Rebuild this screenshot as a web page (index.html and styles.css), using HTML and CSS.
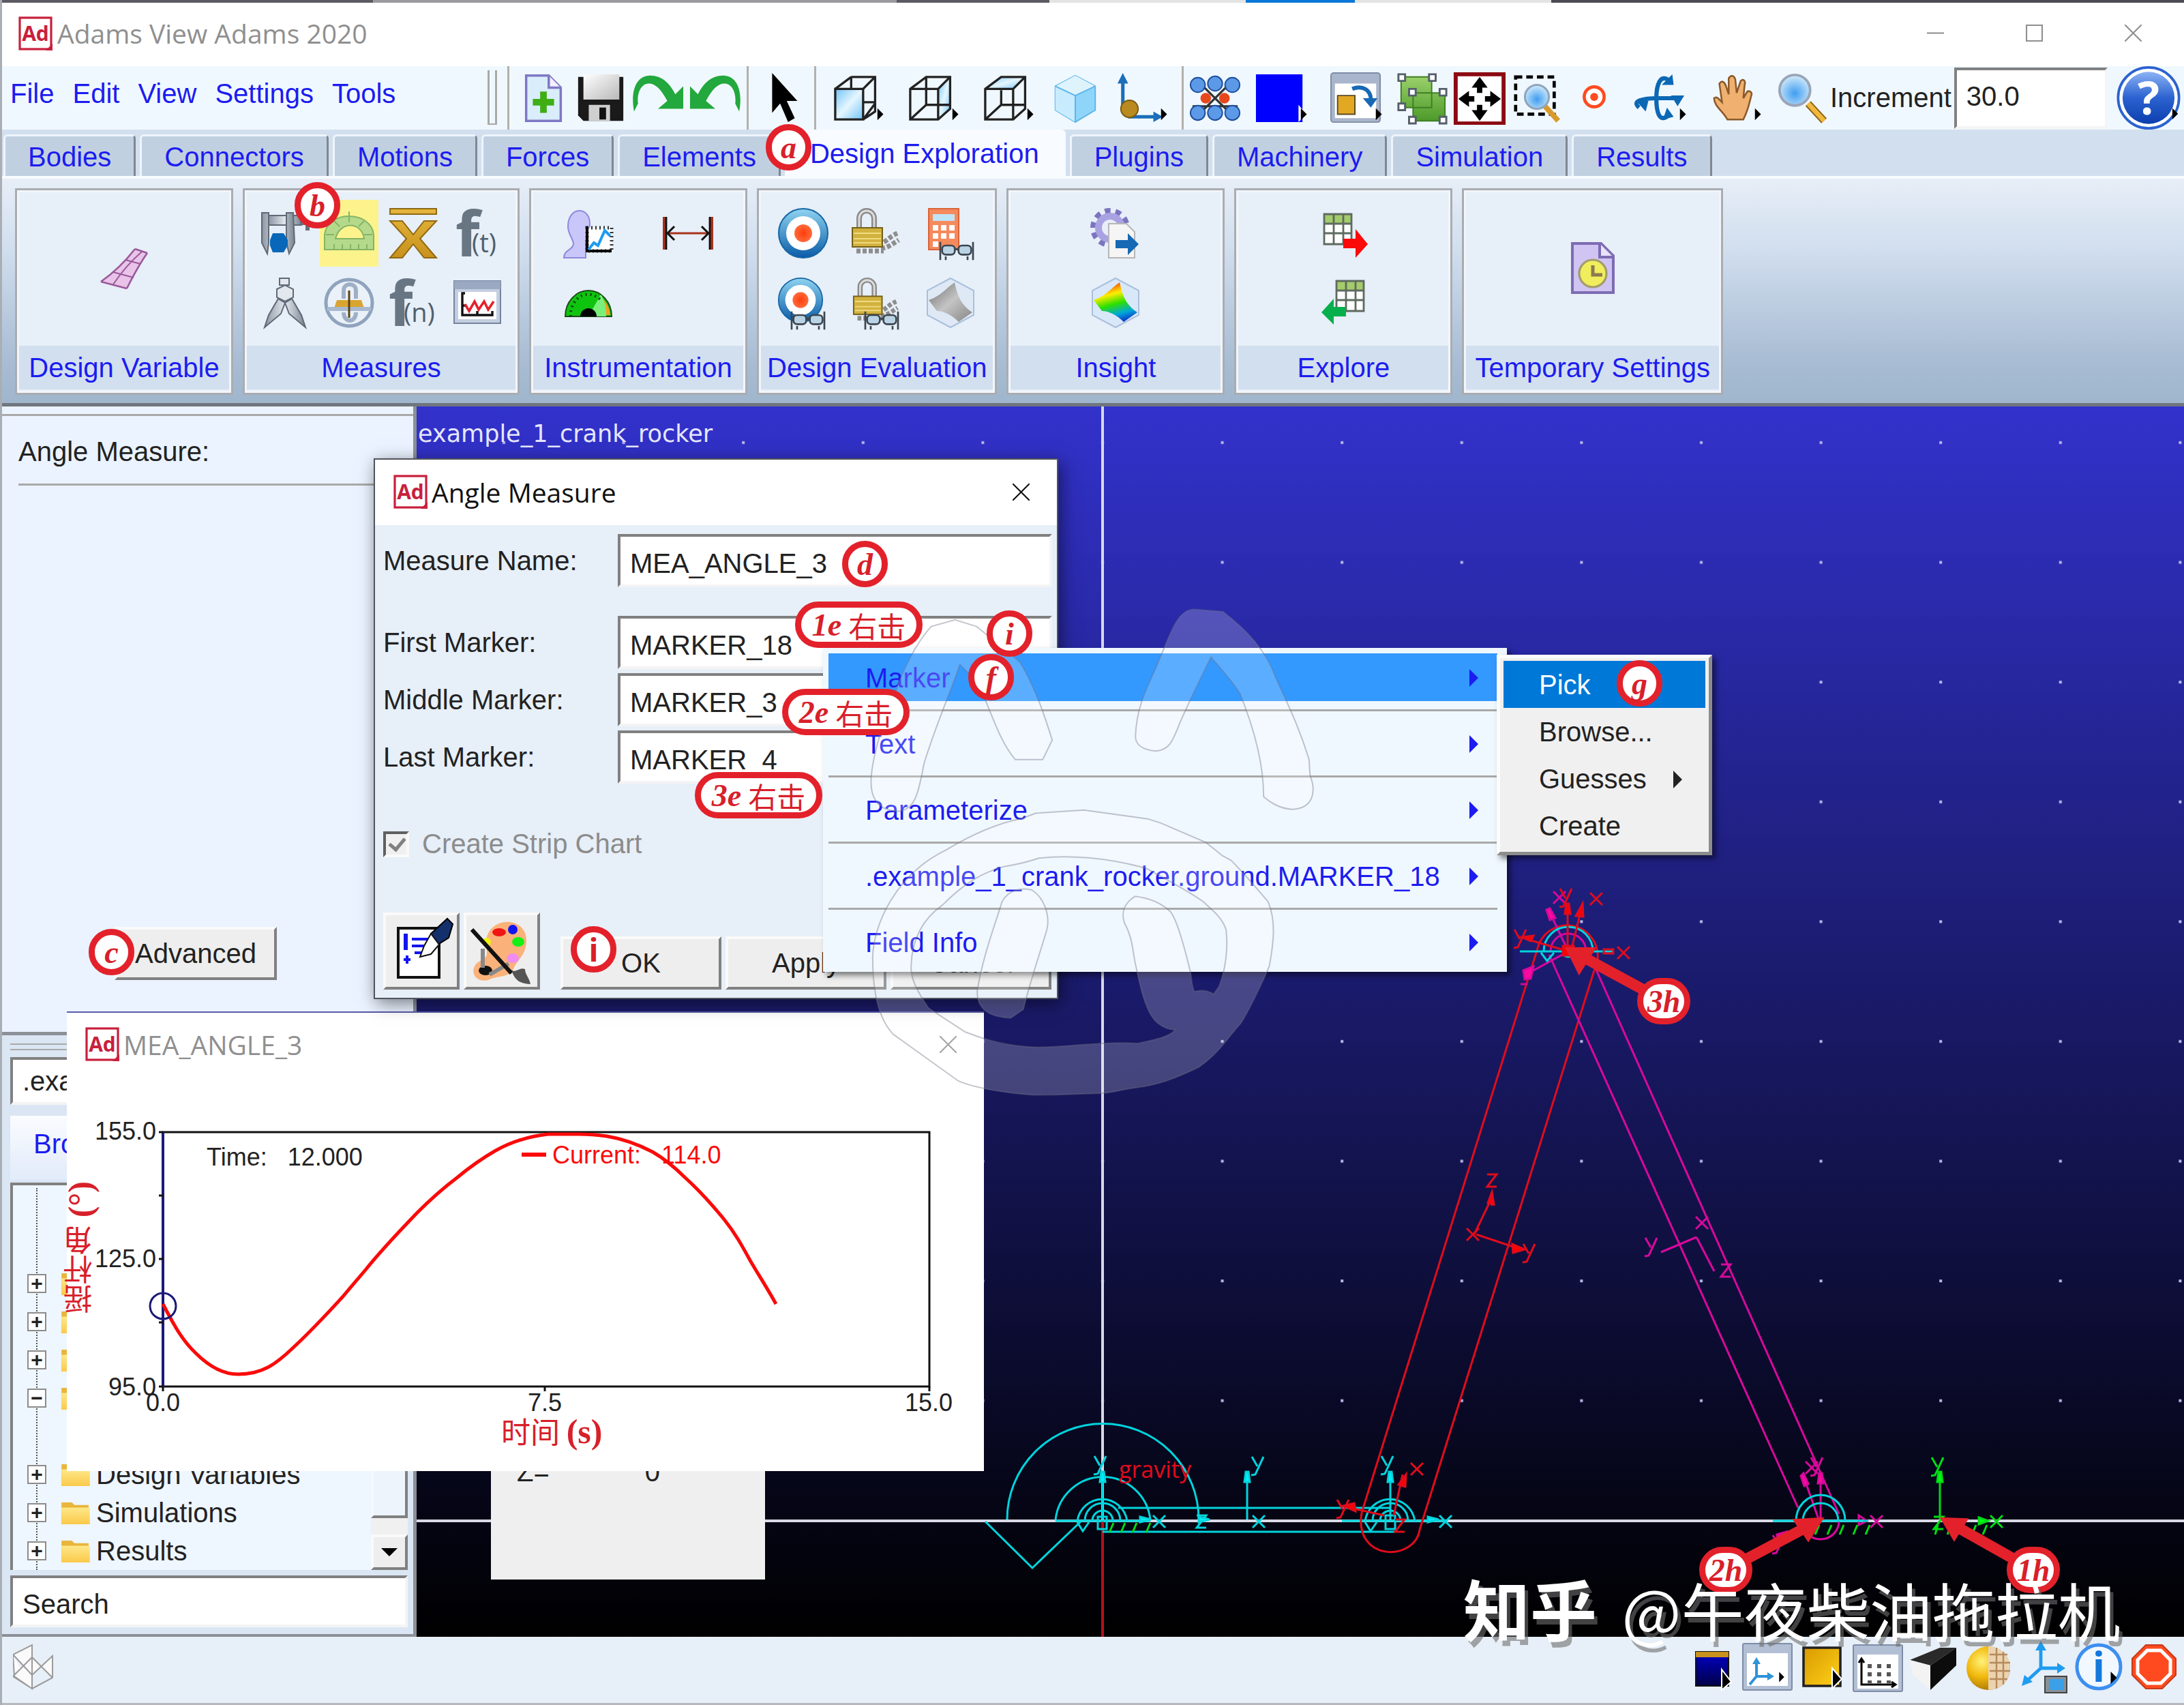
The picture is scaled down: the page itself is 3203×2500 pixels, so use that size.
FILE: index.html
```html
<!DOCTYPE html>
<html lang="zh-CN">
<head>
    <meta charset="UTF-8">
    <meta name="viewport" content="width=device-width, initial-scale=1.0">
    <title>Adams View Adams 2020</title>
    <link rel="stylesheet" href="styles.css">
</head>
<body>
    <!-- shared shapes -->
    <svg class="defs" width="0" height="0">
        <defs>
            <linearGradient id="gBlue" x1="0" y1="0" x2="0" y2="1"><stop offset="0" stop-color="#8fd3f0"/><stop offset="1" stop-color="#0a5ca8"/></linearGradient>
            <linearGradient id="gGlass" x1="0" y1="0" x2="1" y2="1"><stop offset="0" stop-color="#6fc3f7"/><stop offset=".5" stop-color="#e6f6ff"/><stop offset="1" stop-color="#6fc3f7"/></linearGradient>
            <linearGradient id="gSteel" x1="0" y1="0" x2="1" y2="0"><stop offset="0" stop-color="#8b96a3"/><stop offset=".5" stop-color="#e3e8ee"/><stop offset="1" stop-color="#77838f"/></linearGradient>
            <linearGradient id="gGold" x1="0" y1="0" x2="0" y2="1"><stop offset="0" stop-color="#e6b53c"/><stop offset="1" stop-color="#c8921c"/></linearGradient>
            <linearGradient id="gYellow" x1="0" y1="0" x2="1" y2="1"><stop offset="0" stop-color="#d99a00"/><stop offset="1" stop-color="#ffd21a"/></linearGradient>
            <linearGradient id="gGreen" x1="0" y1="0" x2="0" y2="1"><stop offset="0" stop-color="#9ad06a"/><stop offset="1" stop-color="#4c9a2a"/></linearGradient>
            <linearGradient id="gRainbow" x1=".3" y1="0" x2=".6" y2="1"><stop offset="0" stop-color="#f01e0a"/><stop offset=".3" stop-color="#ffee00"/><stop offset=".55" stop-color="#2ee000"/><stop offset=".8" stop-color="#00a8d8"/><stop offset="1" stop-color="#0a3ccc"/></linearGradient>
            <linearGradient id="gGrey" x1="0" y1="0" x2="1" y2="1"><stop offset="0" stop-color="#6e6e6e"/><stop offset=".5" stop-color="#c4c4c4"/><stop offset="1" stop-color="#858585"/></linearGradient>
            <linearGradient id="gHelp" x1="0" y1="0" x2="0" y2="1"><stop offset="0" stop-color="#8cb2f5"/><stop offset=".5" stop-color="#2b62d0"/><stop offset="1" stop-color="#0c3fae"/></linearGradient>
            <linearGradient id="gFolder" x1="0" y1="0" x2="0" y2="1"><stop offset="0" stop-color="#fde88a"/><stop offset="1" stop-color="#fbc94a"/></linearGradient>
            <linearGradient id="gNavy" x1="0" y1="0" x2="0" y2="1"><stop offset="0" stop-color="#0000c8"/><stop offset="1" stop-color="#000048"/></linearGradient>
            <linearGradient id="gSave" x1="0" y1="0" x2="1" y2="1"><stop offset="0" stop-color="#ffffff"/><stop offset="1" stop-color="#b9b9b9"/></linearGradient>
            <radialGradient id="gBall" cx=".35" cy=".35" r=".7"><stop offset="0" stop-color="#fff27a"/><stop offset=".5" stop-color="#f2b90c"/><stop offset="1" stop-color="#a87405"/></radialGradient>
            <radialGradient id="gRed" cx=".5" cy=".5" r=".5"><stop offset="0" stop-color="#ff3d0a"/><stop offset="1" stop-color="#ff6a3c"/></radialGradient>
            <radialGradient id="gLens" cx=".5" cy=".6" r=".6"><stop offset="0" stop-color="#3f9df0"/><stop offset="1" stop-color="#d5ecfb"/></radialGradient>
            <symbol id="logo" viewBox="0 0 25 25"><rect x="1" y="1" width="23" height="23" fill="#fff" stroke="#c8203c" stroke-width="1.6"/><path d="M20 25l5-5v5z" fill="#c8203c"/><text x="12.500" y="18" text-anchor="middle" class="logo-text">Ad</text></symbol>
            <symbol id="glasses" viewBox="0 0 20 12"><rect x="2" y="3" width="7" height="5" rx="2" fill="#b9d3e4" stroke="#3c4650"/><rect x="11" y="3" width="7" height="5" rx="2" fill="#b9d3e4" stroke="#3c4650"/><path d="M1 1v10M19 1v10M9 5h2M4 9v2M16 9v2" stroke="#3c4650" fill="none"/></symbol>
            <symbol id="lock" viewBox="0 0 38 38"><path d="M6 16V8a5.500 5.500 0 0 1 11 0v8" fill="none" stroke="#8b8b8b" stroke-width="4"/><path d="M6 16V8a5.500 5.500 0 0 1 11 0v8" fill="none" stroke="#dcdcdc" stroke-width="1.500"/><path d="M20 27c6-1 7-5 14-8M22 30c5 0 8-3 13-6M4 32h20" stroke="#8d8d8d" stroke-width="3.500" stroke-dasharray="3 1.500" fill="none"/><rect x="1" y="15" width="22" height="14" fill="#d2b23e" stroke="#75601a"/><path d="M2 19h20M2 23h20M2 26h20" stroke="#f0da80"/></symbol>
            <symbol id="target" viewBox="0 0 38 38"><circle cx="19" cy="19" r="18" fill="url(#gBlue)" stroke="#1565a5"/><circle cx="19" cy="19" r="12.500" fill="#fff"/><circle cx="19" cy="19" r="6.500" fill="url(#gRed)"/></symbol>
            <symbol id="dd" viewBox="0 0 8 12"><path d="M1 0l6 6-6 6z" fill="#000"/></symbol>
            <symbol id="folder" viewBox="0 0 22 18"><path d="M0 1h8l2 2h11v15H0z" fill="#e9b53a"/><path d="M0 5h22v13H0z" fill="url(#gFolder)"/></symbol>
            <symbol id="grid" viewBox="0 0 22 24"><rect x="1" y="1" width="20" height="22" fill="#fff"/><rect x="1" y="1" width="20" height="7" fill="#a3cc6a"/><path d="M1 1h20v22H1zM1 8h20M1 15h20M8 1v22M15 1v22" fill="none" stroke="#5f6a60" stroke-width="1.400"/></symbol>
        </defs>
    </svg>

    <div class="app">
        <header class="titlebar">
            <svg class="logo"><use href="#logo"/></svg>
            <h1>Adams View Adams 2020</h1>
            <div class="win-buttons">
                <button aria-label="Minimize"><svg viewBox="0 0 24 24"><path d="M0 12h24"/></svg></button>
                <button aria-label="Maximize"><svg viewBox="0 0 24 24"><path d="M1 1h22v22H1z"/></svg></button>
                <button aria-label="Close"><svg viewBox="0 0 24 24"><path d="M0 0l24 24M24 0L0 24"/></svg></button>
            </div>
        </header>

        <div class="menu-row">
            <nav class="menu">
                <button>File</button>
                <button>Edit</button>
                <button>View</button>
                <button>Settings</button>
                <button>Tools</button>
            </nav>
            <div class="handle"></div>
            <div class="tools">
                <button class="tool" aria-label="New"><svg viewBox="0 0 40 40"><path d="M7 3h17l9 9v25H7z" fill="#d9edfb" stroke="#7f78c4" stroke-width="1.800"/><path d="M24 3v9h9" fill="#f3f0ff" stroke="#7f78c4" stroke-width="1.800"/><path d="M17.500 15h5v5.500H28v5h-5.500V31h-5v-5.500H12v-5h5.500z" fill="#3fae14"/></svg></button>
                <button class="tool" aria-label="Save"><svg viewBox="0 0 40 40"><path d="M3 4h34v33H7l-4-4z" fill="#1a1a1a"/><path d="M7 2h27v19H7z" fill="url(#gSave)"/><path d="M11 25h16v12H11z" fill="#cfcfcf"/><path d="M19 27h5v9h-5z" fill="#111"/></svg></button>
                <button class="tool" aria-label="Redo"><svg viewBox="0 0 40 40"><path d="M2 30C-1 14 4 3 14 3c9 0 15 6 19 14l6-6v17H20l7-6C22 13 18 9 13 9 7 9 4 17 5 24z" fill="#22a83c"/></svg></button>
                <button class="tool" aria-label="Undo"><svg viewBox="0 0 40 40"><path d="M38 30C41 14 36 3 26 3 17 3 11 9 7 17l-6-6v17h19l-7-6c5-9 9-13 14-13 6 0 9 8 8 15z" fill="#22a83c"/></svg></button>
            </div>
            <div class="tools">
                <button class="tool" aria-label="Select"><svg viewBox="0 0 40 40"><path d="M12 1v30l6-7 6 14 5-3-6-13h8z" fill="#000"/></svg></button>
            </div>
            <div class="tools">
                <button class="tool drop" aria-label="Front view"><svg viewBox="0 0 40 40"><path d="M14 4h18v26l-9 6M14 4v19h18M2 13L14 4M23 13l9-9M2 36l12-13M23 36l9-12" fill="none" stroke="#222" stroke-width="1.700"/><path d="M2 13h21v23H2z" fill="url(#gGlass)" stroke="#222" stroke-width="1.700"/><use href="#dd" x="33" y="27" width="6" height="10"/></svg></button>
                <button class="tool drop" aria-label="Right view"><svg viewBox="0 0 40 40"><path d="M23 13l9-9v24l-9 8z" fill="url(#gGlass)"/><path d="M2 13L14 4h18v24l-9 8H2zM2 13h21v23M23 13l9-9M14 4v21h18M2 36l12-11" fill="none" stroke="#222" stroke-width="1.700"/><use href="#dd" x="33" y="27" width="6" height="10"/></svg></button>
                <button class="tool drop" aria-label="Top view"><svg viewBox="0 0 40 40"><path d="M2 13L14 4h18l-9 9z" fill="url(#gGlass)"/><path d="M2 13L14 4h18v24l-9 8H2zM2 13h21v23M23 13l9-9M14 14v11h18M2 36l12-11" fill="none" stroke="#222" stroke-width="1.700"/><use href="#dd" x="33" y="27" width="6" height="10"/></svg></button>
                <button class="tool" aria-label="Isometric view"><svg viewBox="0 0 40 40"><path d="M20 3l15 8v18l-15 9-15-9V11z" fill="#8fd5fa" stroke="#5bb6e8"/><path d="M5 11l15 7v20L5 29z" fill="#c8ebfd"/><path d="M20 3l15 8-15 7-15-7z" fill="#dff3fd"/><path d="M5 11l15 7 15-7M20 18v20" fill="none" stroke="#5bb6e8"/></svg></button>
                <button class="tool drop" aria-label="Orient"><svg viewBox="0 0 40 40"><path d="M6 30V6M10 34h20" stroke="#1a6fb8" stroke-width="2.600"/><path d="M2 9l4-8 4 8zM29 30l7 4-7 4z" fill="#1a6fb8"/><circle cx="11" cy="28" r="6.500" fill="#b88a20" stroke="#7a5a10"/><use href="#dd" x="34" y="27" width="6" height="10"/></svg></button>
            </div>
            <div class="tools tools-wide">
                <button class="tool" aria-label="Verify"><svg viewBox="0 0 40 40"><path d="M3 26h34M8 8l24 24M32 8L8 32" stroke="#333" stroke-width="1.600"/><g fill="#5c9ae8" stroke="#1f4f9c"><circle cx="7" cy="10" r="5.500"/><circle cx="20" cy="9" r="5.500"/><circle cx="33" cy="10" r="5.500"/><circle cx="7" cy="31" r="5.500"/><circle cx="20" cy="31" r="5.500"/><circle cx="33" cy="31" r="5.500"/></g><circle cx="13" cy="20" r="4" fill="#e8471c"/><circle cx="27" cy="20" r="4" fill="#e8471c"/></svg></button>
                <button class="tool drop" aria-label="Color"><svg viewBox="0 0 40 40"><path d="M1 2h35v36H1z" fill="#0000ff"/><path d="M33 25l6 7-6 6z" fill="#fff"/><use href="#dd" x="34" y="27" width="6" height="10"/></svg></button>
                <button class="tool drop" aria-label="Rotate window"><svg viewBox="0 0 40 40"><rect x="1" y="1" width="37" height="37" rx="2" fill="#a9b5ca" stroke="#7f8ca6"/><path d="M4 9h31v26H4z" fill="#fff"/><path d="M6 18h13v14H6z" fill="#e2a824" stroke="#5a4a20"/><path d="M17 13c8-3 14 1 14 8" fill="none" stroke="#1769b5" stroke-width="3"/><path d="M25 20h11l-5 7z" fill="#1769b5"/><use href="#dd" x="34" y="27" width="6" height="10"/></svg></button>
                <button class="tool" aria-label="Group"><svg viewBox="0 0 40 40"><path d="M4 4h23v23H4zM13 16h24v21H13z" fill="url(#gGreen)" stroke="#3f7f23"/><g fill="#fff" stroke="#555f6b" stroke-width="1.500"><path d="M2 2h5v5H2zM25 2h5v5h-5zM2 24h5v5H2zM10 13h5v5h-5zM33 13h5v5h-5zM10 34h5v5h-5zM33 34h5v5h-5z"/></g></svg></button>
                <button class="tool" aria-label="Fit"><svg viewBox="0 0 40 40"><rect x="2" y="2" width="36" height="37" fill="#fff" stroke="#8c0a14" stroke-width="3"/><path d="M20 4l6 8h-4v4h-4v-4h-4zM20 37l6-8h-4v-4h-4v4h-4zM4 20.500l8-6v4h4v4h-4v4zM36 20.500l-8-6v4h-4v4h4v4z" fill="#000"/></svg></button>
                <button class="tool" aria-label="Zoom box"><svg viewBox="0 0 40 40"><rect x="4" y="4" width="29" height="28" fill="none" stroke="#000" stroke-width="2.400" stroke-dasharray="5 3"/><path d="M26 26l10 11" stroke="#d99a2b" stroke-width="4"/><circle cx="20" cy="19" r="9" fill="url(#gLens)" stroke="#8fa6bd" stroke-width="1.600"/></svg></button>
                <button class="tool" aria-label="Center"><svg viewBox="0 0 40 40"><circle cx="20" cy="19" r="7.500" fill="#fff" stroke="#ff4b20" stroke-width="2.400"/><circle cx="20" cy="19" r="3" fill="#ff4b20"/></svg></button>
                <button class="tool drop" aria-label="Rotate"><svg viewBox="0 0 40 40"><g fill="none" stroke="#0c68b4" stroke-width="3.200"><path d="M27 7c-7-6-10 3-10 13s2 19 9 13"/><path d="M4 27c-6-5 3-7 14-7h14"/></g><path d="M21 10h9l-1-8zM25 27l-3 9 8-2zM28 18h10l-5 8zM2 22h9l-2 8z" fill="#0c68b4"/><use href="#dd" x="34" y="27" width="6" height="10"/></svg></button>
                <button class="tool drop" aria-label="Pan"><svg viewBox="0 0 40 40"><path d="M14 36c-3-6-10-10-10-16 2-2 4 1 6 3L8 9c2-3 4-1 5 2l2 6V5c2-3 4-2 5 1l1 10 3-9c2-2 4 0 3 3l-1 10 3-5c2-1 4 1 3 3-2 8-3 12-6 18z" fill="#f0b070" stroke="#8a5a2b" stroke-width="1.300"/><use href="#dd" x="34" y="27" width="6" height="10"/></svg></button>
                <button class="tool" aria-label="Zoom"><svg viewBox="0 0 40 40"><path d="M25 24l12 13" stroke="#8c6418" stroke-width="5.500"/><path d="M25 24l12 13" stroke="#f0b83c" stroke-width="3.500"/><circle cx="15" cy="14" r="11.500" fill="url(#gLens)" stroke="#9aa6b8" stroke-width="2"/></svg></button>
                <label for="increment">Increment</label>
                <input id="increment" class="field increment" type="text" value="30.0">
                <button class="help" aria-label="Help"><svg viewBox="0 0 50 50"><circle cx="25" cy="25" r="24" fill="#fff" stroke="#2b62d0" stroke-width="2"/><circle cx="25" cy="25" r="20.500" fill="url(#gHelp)"/><text x="25" y="38" text-anchor="middle" class="help-text">?</text><use href="#dd" x="43" y="33" width="6" height="9"/></svg></button>
            </div>
        </div>

        <div class="tabs" role="tablist">
            <button role="tab" class="tab">Bodies</button>
            <button role="tab" class="tab">Connectors</button>
            <button role="tab" class="tab">Motions</button>
            <button role="tab" class="tab">Forces</button>
            <button role="tab" class="tab">Elements</button>
            <button role="tab" class="tab active" aria-selected="true">Design Exploration</button>
            <button role="tab" class="tab">Plugins</button>
            <button role="tab" class="tab">Machinery</button>
            <button role="tab" class="tab">Simulation</button>
            <button role="tab" class="tab">Results</button>
        </div>

        <section class="ribbon">
            <div class="group">
                <div class="icons single">
                    <button class="cell" aria-label="Design Variable"><svg viewBox="0 0 38 38"><path d="M27 5l9 3C31 15 26 24 21 34L2 29C12 22 20 14 27 5z" fill="#e9c4e8"/><path d="M27 5l9 3M2 29l19 5M27 5C20 14 12 22 2 29M36 8c-5 7-10 16-15 26" fill="none" stroke="#9a5a9c" stroke-width="1.300"/><path d="M20 13l11 3M11 22l15 4M32 7C24 14 17 22 11 31" stroke="#9a5a9c" fill="none"/></svg></button>
                </div>
                <h2>Design Variable</h2>
            </div>
            <div class="group">
                <div class="icons four">
                    <button class="cell" aria-label="Point-to-point"><svg viewBox="0 0 38 38"><path d="M7 6h24v7H7z" fill="url(#gSteel)" stroke="#5f6a76"/><path d="M30 8h7v9h-3v-4h-4z" fill="#66717d"/><path d="M2 4h5v22l-1 8-4-8zM20 4h5l1 22-4 8-2-8z" fill="url(#gSteel)" stroke="#5f6a76"/><path d="M10 19h8l3 5v4l-3 5h-8l-2-5v-4z" fill="#0867b8"/></svg></button>
                    <button class="cell lit" aria-label="Angle"><svg viewBox="0 0 38 38"><path d="M1 31V20C3 2 35 2 37 20v11z" fill="#b4d98a" stroke="#86b466"/><path d="M9 23h21c-2-13-18-13-21 0z" fill="#fdf38c" stroke="#86b466"/><path d="M19 3v8M2 20h6M30 20h6M8 27v4M14 27v4M20 27v4M26 27v4M32 27v4M8 10l4 4M30 10l-4 4" stroke="#86b466"/></svg></button>
                    <button class="cell" aria-label="Average"><svg viewBox="0 0 38 38"><path d="M2 1h34v4H2zM2 10h9l8 10 8-10h9L24 23l12 14h-9l-8-10-8 10H2l12-14z" fill="url(#gGold)" stroke="#8f6a14"/></svg></button>
                    <button class="cell" aria-label="f(t)"><svg viewBox="0 0 38 38"><text x="3" y="36" class="fx">f</text><text x="15" y="33" class="fx-sub">(t)</text></svg></button>
                    <button class="cell" aria-label="Orientation"><svg viewBox="0 0 38 38"><path d="M15 1h7v5h-7zM13 9l6-3 6 3v6l-6 3-6-3z" fill="#e3e8ee" stroke="#5f6a76"/><path d="M14 16l5 3-3 8L4 37l3-9zM24 16l-5 3 3 8 12 10-3-9z" fill="url(#gSteel)" stroke="#5f6a76"/></svg></button>
                    <button class="cell" aria-label="Computed"><svg viewBox="0 0 38 38"><circle cx="19" cy="19" r="17" fill="#eaf1f9" stroke="#8fa3be" stroke-width="2.500"/><path d="M15 16V10c0-6 9-6 9 0v6M15 26c0 8 9 8 9 0" fill="none" stroke="#9fb0c6" stroke-width="3"/><path d="M10 17h18l2 6H8z" fill="#d9a531"/><path d="M3 22h32v3H3z" fill="#a9b9cf"/><path d="M19 10v20" stroke="#5a4310" stroke-width="1.500"/></svg></button>
                    <button class="cell" aria-label="f(n)"><svg viewBox="0 0 38 38"><text x="1" y="36" class="fx">f</text><text x="12" y="33" class="fx-sub">(n)</text></svg></button>
                    <button class="cell" aria-label="Strip chart"><svg viewBox="0 0 38 38"><rect x="2" y="3" width="34" height="31" fill="#c3cee0" stroke="#75839f"/><path d="M2 3h34v6H2z" fill="#9aa8c2"/><path d="M5 11h28v20H5z" fill="#fff"/><path d="M10 12h-2v16h22v-3M8 21h3M19 25v3" fill="none" stroke="#111" stroke-width="1.700"/><path d="M10 20l3 5 4-7 3 6 4-6 3 6 4-6" fill="none" stroke="#e4202c" stroke-width="1.800"/></svg></button>
                </div>
                <h2>Measures</h2>
            </div>
            <div class="group">
                <div class="icons two">
                    <button class="cell" aria-label="Object"><svg viewBox="0 0 38 38"><path d="M1 37c0-6 6-5 7-10 0-4-4-7-4-13C4-1 20-1 20 12c0 6-3 8-3 14v11z" fill="#c9c6fa" stroke="#8f89dc"/><path d="M18 15h18v17H18z" fill="#fff" stroke="#333" stroke-dasharray="1 2" stroke-width="2.500"/><path d="M18 14v18h18" fill="none" stroke="#000" stroke-width="2"/><path d="M19 31l4-5 3 2 5-11 4 4" fill="none" stroke="#1f9bf0" stroke-width="2"/></svg></button>
                    <button class="cell" aria-label="Dimension"><svg viewBox="0 0 38 38"><path d="M2 7v24M36 7v24" stroke="#a8321c" stroke-width="3"/><path d="M3 7v24M35 7v24" stroke="#111" stroke-width="1.400"/><path d="M5 19h28" stroke="#a8321c" stroke-width="1.500"/><path d="M9 14l-5 5 5 5M29 14l5 5-5 5" fill="none" stroke="#111" stroke-width="1.500"/></svg></button>
                    <button class="cell" aria-label="Gauge"><svg viewBox="0 0 38 38"><path d="M2 29a17 19 0 0 1 34 0z" fill="#0fc40f" stroke="#1b4d1b"/><path d="M27 14a17 19 0 0 1 8 14h-6z" fill="#f0a020"/><path d="M28 13L19 29h13c0-7-1-12-4-16z" fill="#7af07a"/><path d="M13 29a6 6 0 0 1 12 0z" fill="#000"/><path d="M6 29a13 15 0 0 1 22-12" fill="none" stroke="#0b3d0b" stroke-width="2" stroke-dasharray="1 2.500"/></svg></button>
                </div>
                <h2>Instrumentation</h2>
            </div>
            <div class="group">
                <div class="icons three">
                    <button class="cell" aria-label="Objective"><svg><use href="#target"/></svg></button>
                    <button class="cell" aria-label="Constraint"><svg><use href="#lock"/></svg></button>
                    <button class="cell" aria-label="Evaluate"><svg viewBox="0 0 38 38"><path d="M3 1h22v30H3z" fill="#f58a5c" stroke="#d9653a"/><path d="M6 5h16v5H6z" fill="#bfe4f7"/><g fill="#fff"><path d="M6 13h4v4H6zM12 13h4v4h-4zM18 13h4v4h-4zM6 19h4v4H6zM12 19h4v4h-4zM18 19h4v4h-4zM6 25h4v4H6z"/></g><use href="#glasses" x="9" y="24" width="29" height="16"/></svg></button>
                    <button class="cell" aria-label="Review objective"><svg viewBox="0 0 38 38"><use href="#target" width="34" height="34"/><use href="#glasses" x="8" y="24" width="29" height="16"/></svg></button>
                    <button class="cell" aria-label="Review constraint"><svg viewBox="0 0 38 38"><use href="#lock" width="38" height="36"/><use href="#glasses" x="8" y="24" width="29" height="16"/></svg></button>
                    <button class="cell" aria-label="Surface"><svg viewBox="0 0 38 38"><path d="M19 1l17 9v18l-17 9-17-9V10z" fill="#dfe9f6" stroke="#a9bfdc"/><path d="M3 17C12 14 16 8 22 4c2 9 4 16 13 22l-10 7C20 28 14 25 9 25z" fill="url(#gGrey)"/></svg></button>
                </div>
                <h2>Design Evaluation</h2>
            </div>
            <div class="group">
                <div class="icons one">
                    <button class="cell" aria-label="Export"><svg viewBox="0 0 38 38"><circle cx="15" cy="15" r="12" fill="none" stroke="#7d74c0" stroke-width="5" stroke-dasharray="4 3.500"/><circle cx="15" cy="15" r="8.500" fill="#e7eef7" stroke="#a9a2e2" stroke-width="5"/><path d="M14 12h13l6 6v19H14z" fill="#f5f5f5" stroke="#b7b7b7"/><path d="M19 24h9v-5l8 8-8 8v-5h-9z" fill="#1769b5"/></svg></button>
                    <button class="cell" aria-label="Insight"><svg viewBox="0 0 38 38"><path d="M19 1l17 9v18l-17 9-17-9V10z" fill="#d9e8f8" stroke="#a9bfdc"/><path d="M3 17C12 14 16 8 22 4c2 9 4 16 13 22l-10 7C20 28 14 25 9 25z" fill="url(#gRainbow)"/></svg></button>
                </div>
                <h2>Insight</h2>
            </div>
            <div class="group">
                <div class="icons one">
                    <button class="cell" aria-label="Export table"><svg viewBox="0 0 38 38"><use href="#grid" x="4" y="4" width="22" height="24"/><path d="M19 23h9v-7l9 11-9 10v-7h-9z" fill="#fb0a0a"/></svg></button>
                    <button class="cell" aria-label="Import table"><svg viewBox="0 0 38 38"><use href="#grid" x="13" y="2" width="22" height="24"/><path d="M21 22h-9v-6L3 26l9 9v-6h9z" fill="#05b04c"/></svg></button>
                </div>
                <h2>Explore</h2>
            </div>
            <div class="group">
                <div class="icons single">
                    <button class="cell" aria-label="Temporary Settings"><svg viewBox="0 0 38 38"><path d="M4 1h21l9 9v27H4z" fill="#cfc4f2" stroke="#7d6cb4" stroke-width="2"/><path d="M24 1v10h10" fill="#e8e2fb" stroke="#7d6cb4" stroke-width="2"/><circle cx="19" cy="23" r="10" fill="#f0ee5c" stroke="#a39c6c" stroke-width="1.600"/><path d="M19 17v7h7" fill="none" stroke="#8a7a50" stroke-width="2.500"/></svg></button>
                </div>
                <h2>Temporary Settings</h2>
            </div>
        </section>

        <main class="workspace">
            <aside class="sidebar">
                <section class="measure">
                    <h2>Angle Measure:</h2>
                    <button class="btn advanced">Advanced</button>
                </section>
                <section class="browser">
                    <div class="grip"></div>
                    <input class="field combo" type="text" value=".exa" aria-label="Model">
                    <div class="browse"><button>Browse</button></div>
                    <div class="tree">
                        <ul>
                            <li></li>
                            <li></li>
                            <li><button class="exp" aria-label="Expand">+</button><svg><use href="#folder"/></svg></li>
                            <li><button class="exp" aria-label="Expand">+</button><svg><use href="#folder"/></svg></li>
                            <li><button class="exp" aria-label="Expand">+</button><svg><use href="#folder"/></svg></li>
                            <li><button class="exp" aria-label="Collapse">−</button><svg><use href="#folder"/></svg></li>
                            <li></li>
                            <li><button class="exp" aria-label="Expand">+</button><svg><use href="#folder"/></svg>Design Variables</li>
                            <li><button class="exp" aria-label="Expand">+</button><svg><use href="#folder"/></svg>Simulations</li>
                            <li><button class="exp" aria-label="Expand">+</button><svg><use href="#folder"/></svg>Results</li>
                        </ul>
                        <div class="scroll">
                            <div class="thumb"></div>
                            <button class="down" aria-label="Scroll down"></button>
                        </div>
                    </div>
                    <input class="field search" type="text" value="Search" aria-label="Search">
                </section>
            </aside>

            <div class="canvas">
                <svg class="model" viewBox="611 596 2592 1804">
                    <defs>
                        <pattern id="dots" x="1529" y="561" width="175.600" height="175.600" patternUnits="userSpaceOnUse"><rect x="86" y="86" width="4" height="4" fill="#b9b9ea"/></pattern>
                        <g id="x"><path d="M-9-9L9 9M9-9L-9 9"/></g>
                        <g id="y"><path d="M-8-13L0 1M9-13L-3 13l-6 1"/></g>
                        <g id="z"><path d="M-7-9H7L-7 9H7"/></g>
                        <g id="up"><path d="M0 0V-70"/><path d="M-4-55h8l-2-15h-4z" class="solid"/></g>
                    </defs>
                    <rect x="610" y="596" width="2593" height="1628" fill="url(#dots)"/>
                    <text x="613" y="648" class="model-name">example_1_crank_rocker</text>
                    <path d="M1617 596V2230" class="axis"/>
                    <path d="M610 2230H3203" class="axis"/>
                    <path d="M1617 2230V2400" stroke="#b4101c" stroke-width="4"/>

                    <!-- crank -->
                    <g class="ln cyan">
                        <path d="M1477 2228a140 140 0 0 1 281 0M1548 2228a70 71 0 0 1 139 0M1580 2230a37 38 0 0 1 73 0M1591 2230a26 26 0 0 1 52 0M1602 2230a15 15 0 0 1 30 0"/>
                        <path d="M1548 2230h139M1445 2231l69 68 71-68M1580 2232l8 13 9-13"/>
                        <path d="M1640 2211H2039M1617 2246H2046"/>
                        <path d="M2002 2230a37 38 0 0 1 73 0M2013 2230a26 26 0 0 1 52 0M2024 2230a15 15 0 0 1 30 0M1968 2230h150M2002 2232l8 13 9-13"/>
                        <rect x="1610" y="2224" width="13" height="18"/>
                        <rect x="2032" y="2222" width="14" height="20"/>
                        <use href="#up" x="1617" y="2228"/><use href="#up" x="1829" y="2228"/><use href="#up" x="2039" y="2228"/>
                        <use href="#y" x="1613" y="2148"/><use href="#y" x="1844" y="2149"/><use href="#y" x="2034" y="2148"/>
                        <use href="#x" x="1700" y="2231"/><use href="#x" x="1846" y="2231"/><use href="#x" x="2120" y="2231"/>
                        <use href="#z" x="1762" y="2231"/>
                        <path d="M1672 2224l16 4-16 4zM1758 2224l16 4-16 4zM2094 2224l16 4-16 4z" class="solid"/>
                    </g>
                    <text x="1641" y="2167" class="gravity">gravity</text>
                    <path class="ln green" d="M1633 2233l-6 14M1650 2233l-6 14M1667 2233l-6 14M1687 2233l-6 14"/>

                    <!-- coupler -->
                    <g class="ln red">
                        <path d="M2257 1384L1997 2218M2343 1407L2082 2243M2257 1384a45 45 0 0 1 86 23M1997 2218C1985 2290 2075 2290 2082 2243"/>
                        <path d="M2162 1810L2186 1760M2165 1810l66 22M2188 1748v20M2044 2222l13-60M2030 2222l-54-12"/>
                        <path d="M2182 1764l6-16 3 18zM2218 1824l18 8-17 5zM2051 2177l11-15-1 18zM1970 2208l16-4 2 12z" class="solid"/>
                        <use href="#z" x="2188" y="1731"/><use href="#x" x="2160" y="1810"/><use href="#y" x="2242" y="1837"/>
                        <use href="#x" x="2078" y="2154"/><use href="#y" x="1969" y="2212"/><use href="#z" x="2053" y="2237"/>
                    </g>

                    <!-- rocker -->
                    <g class="ln pink">
                        <path d="M2272 1400L2637 2211M2340 1420L2697 2220M2643 2230a27 27 0 0 0 54 0M2274 1395a26 26 0 0 1 52 0"/>
                        <path d="M2300 1395L2271 1334M2300 1395L2236 1430M2488 1814l-52 22M2488 1814l26 50M2670 2230V2160M2668 2230l-24-68M2670 2232l-60 30"/>
                        <path d="M2268 1334l5-2 8 14-8 3zM2234 1423l15-6-4 18-9 1zM2641 2164l4-4 7 16-6 3zM2666 2175h8l-2-15h-4zM2606 2250l14-4-4 14-8 2z" class="solid"/>
                        <use href="#x" x="2287" y="1316"/><use href="#x" x="2496" y="1793"/><use href="#y" x="2421" y="1828"/><use href="#z" x="2531" y="1863"/>
                        <use href="#x" x="2657" y="2152"/><use href="#y" x="2664" y="2150"/><use href="#x" x="2752" y="2231"/><use href="#y" x="2608" y="2264"/>
                        <path d="M2230 1443h10M2726 2222l12 8-12 6z"/>
                    </g>
                    <g class="ln cyan">
                        <path d="M2264 1395a36 36 0 0 1 72 0M2229 1395h138M2260 1397l9 12 10-12M2292 1398a9 9 0 0 0 16 0"/>
                        <path d="M2634 2230a36 38 0 0 1 72 0M2644 2230a26 26 0 0 1 52 0M2600 2230h140M2634 2232l8 12"/>
                    </g>
                    <g class="ln red">
                        <use href="#up" x="2299" y="1395"/>
                        <path d="M2304 1395l12-50M2290 1392l-48-14M2352 1392h14v6h-14z"/>
                        <path d="M2311 1343l10-18 1 19zM2232 1374l17-2-4 8zM2292 1387h16v14h-16z" class="solid"/>
                        <use href="#y" x="2296" y="1316"/><use href="#x" x="2341" y="1318"/><use href="#x" x="2381" y="1397"/><use href="#y" x="2229" y="1376"/>
                    </g>
                    <path class="ln green" d="M2668 2236l-6 14M2686 2236l-6 14M2704 2236l-6 14M2724 2236l-6 14M2742 2236l-6 14M2842 2236l-4 14M2862 2236l-6 14M2880 2236l-6 14M2898 2236l-6 14M2914 2236l-6 14"/>
                    <g class="ln green">
                        <use href="#up" x="2845" y="2228"/><use href="#y" x="2841" y="2150"/><use href="#x" x="2928" y="2231"/><use href="#z" x="2843" y="2233"/>
                        <path d="M2902 2225l14 5-14 5z" class="solid"/>
                    </g>

                    <g class="callout-arrows">
                        <path d="M2430 1462L2325 1405M2531 2302L2648 2240M2982 2302L2872 2240"/>
                        <path d="M2300 1392h36l-20 32zM2670 2228l-36 2 18 26zM2850 2228l32 1-16 26z" class="solid"/>
                    </g>
                </svg>
            </div>
        </main>

        <footer class="statusbar">
            <svg class="status-mark" viewBox="0 0 30 34"><path d="M0 8l14-7v32L1 24zM14 33l15-8V9l-15 14L0 8M14 33L0 24l14-14 15 15" fill="#fafafa" stroke="#9b9b9b"/></svg>
            <div class="status-icons">
                <button aria-label="Background"><svg viewBox="0 0 38 38"><path d="M7 8h24v25H7z" fill="url(#gNavy)" stroke="#111"/><path d="M7 8h24v4H7z" fill="#c8921c"/><path d="M26 21v15l7-6z" fill="#000" stroke="#fff"/></svg></button>
                <button aria-label="Triad"><svg viewBox="0 0 38 38"><rect x="1" y="2" width="36" height="34" rx="1" fill="#b3bfd4" stroke="#7f8ca6"/><path d="M4 9h30v24H4z" fill="#fff"/><path d="M11 26V16M11 26h9M11 26l-5 6" stroke="#2f93d8" stroke-width="2" fill="none"/><path d="M8 17l3-5 3 5zM19 23l5 3-5 3z" fill="#2f93d8"/><use href="#dd" x="27" y="22" width="5" height="9"/></svg></button>
                <button aria-label="Color"><svg viewBox="0 0 38 38"><path d="M5 5h27v28H5z" fill="url(#gYellow)" stroke="#222" stroke-width="1.800"/><path d="M26 20v15l7-7z" fill="#000" stroke="#fff"/></svg></button>
                <button aria-label="Grid"><svg viewBox="0 0 38 38"><rect x="1" y="3" width="36" height="34" rx="1" fill="#b3bfd4" stroke="#7f8ca6"/><path d="M4 10h30v25H4z" fill="#fff"/><path d="M7 14v18h24M5 16l2-3 2 3M29 30l3 2-3 2" fill="none" stroke="#000" stroke-width="1.500"/><g stroke="#555" stroke-width="3" stroke-dasharray="3 3"><path d="M13 17v14M20 17v14M27 17v14"/></g></svg></button>
                <button aria-label="Depth"><svg viewBox="0 0 38 38"><path d="M2 14L24 5h12L17 18z" fill="#2a2a2a"/><path d="M17 18L36 5v13L17 36z" fill="#0c0c0c"/><path d="M2 14l15 4v18L4 25z" fill="#f3f3f3"/></svg></button>
                <button aria-label="Shading"><svg viewBox="0 0 38 38"><circle cx="19" cy="20" r="16" fill="url(#gBall)"/><path d="M19 4a16 16 0 0 1 0 32z" fill="#ecd3b0"/><path d="M20 10h13M20 16h15M20 22h15M20 28h13M25 5v30M30 8v24" stroke="#b58a5c" stroke-width="1.200"/></svg></button>
                <button aria-label="Axes"><svg viewBox="0 0 38 38"><path d="M17 20V4M17 20h14M17 20L6 30" stroke="#1f9bf0" stroke-width="2.400"/><path d="M13 7l4-7 4 7zM29 16l6 4-6 4zM3 33l2-8 6 5z" fill="#1f9bf0"/><path d="M20 26h16v12H20z" fill="#8a9096" stroke="#444"/><path d="M23 28h11v8H23z" fill="#3aa0e8"/></svg></button>
                <button aria-label="Info"><svg viewBox="0 0 38 38"><circle cx="19" cy="19" r="16" fill="#f2f8ff" stroke="#3d8ff0" stroke-width="2.500"/><text x="19" y="30" text-anchor="middle" class="info-text">i</text><use href="#dd" x="27" y="22" width="6" height="10"/></svg></button>
                <button aria-label="Stop"><svg viewBox="0 0 38 38"><path d="M13 3h12l10 10v12L25 35H13L3 25V13z" fill="#ff4a20" stroke="#c83a1a"/><path d="M14 7h10l7 7v10l-7 7H14l-7-7V14z" fill="none" stroke="#fff" stroke-width="2.500"/></svg></button>
            </div>
        </footer>

        <!-- coordinate window -->
        <div class="coords"><span>Z=</span><span>0</span></div>

        <!-- strip chart window -->
        <section class="window chart">
            <div class="win-title">
                <svg class="logo"><use href="#logo"/></svg>
                <h2>MEA_ANGLE_3</h2>
                <button class="close" aria-label="Close"><svg viewBox="0 0 24 24"><path d="M0 0l24 24M24 0L0 24"/></svg></button>
            </div>
            <svg class="plot" viewBox="98 1577 1345 580">
                <path d="M239 1660H1363V2033H239z" fill="none" stroke="#111" stroke-width="3"/>
                <path d="M239 1660V2033" stroke="#1a1a78" stroke-width="4"/>
                <path d="M233 1660h6M233 1753h6M233 1846h6M233 1939h6M233 2033h6M239 2033v7M799 2033v7M1363 2033v7" stroke="#111" stroke-width="3"/>
                <path d="M239 1912C256 1945 268 1966 287 1984 308 2005 328 2015 349 2015 385 2015 405 2000 430 1976 460 1948 480 1926 502 1902L536 1862C560 1832 585 1806 612 1778 632 1758 650 1742 670 1727 688 1712 706 1699 727 1687 752 1673 776 1666 804 1663H850C864 1663 876 1664 890 1666 914 1670 936 1678 957 1689 976 1700 990 1712 1004 1726 1026 1746 1044 1766 1062 1788 1078 1808 1088 1826 1100 1848 1114 1872 1126 1890 1138 1912" fill="none" stroke="#fb0a0a" stroke-width="5"/>
                <circle cx="239" cy="1915" r="19" fill="none" stroke="#1a1a78" stroke-width="3"/>
                <g class="plot-text">
                    <text x="229" y="1671" text-anchor="end">155.0</text>
                    <text x="229" y="1858" text-anchor="end">125.0</text>
                    <text x="229" y="2046" text-anchor="end">95.0</text>
                    <text x="239" y="2069" text-anchor="middle">0.0</text>
                    <text x="799" y="2069" text-anchor="middle">7.5</text>
                    <text x="1362" y="2069" text-anchor="middle">15.0</text>
                    <text x="303" y="1709" xml:space="preserve">Time:   12.000</text>
                    <text x="810" y="1706" class="current" xml:space="preserve">Current:   114.0</text>
                </g>
                <path d="M765 1693h36" stroke="#fb0a0a" stroke-width="6"/>
                <text x="735" y="2116" class="plot-title">时间 <tspan class="unit">(s)</tspan></text>
            </svg>
        </section>
        <div class="y-title">摇杆角 <b>(°)</b></div>

        <!-- angle measure dialog -->
        <form class="window dialog">
            <div class="win-title">
                <svg class="logo"><use href="#logo"/></svg>
                <h2>Angle Measure</h2>
                <button type="button" class="close" aria-label="Close"><svg viewBox="0 0 24 24"><path d="M0 0l24 24M24 0L0 24"/></svg></button>
            </div>
            <div class="form">
                <label for="mname">Measure Name:</label>
                <input id="mname" class="field" type="text" value="MEA_ANGLE_3">
                <div class="space"></div>
                <label for="m1">First Marker:</label>
                <input id="m1" class="field" type="text" value="MARKER_18">
                <label for="m2">Middle Marker:</label>
                <input id="m2" class="field" type="text" value="MARKER_3">
                <label for="m3">Last Marker:</label>
                <input id="m3" class="field" type="text" value="MARKER_4">
            </div>
            <label class="check"><input type="checkbox" checked disabled> Create Strip Chart</label>
            <div class="actions">
                <button type="button" class="btn square" aria-label="Comments"><svg viewBox="0 0 50 50"><path d="M8 8h30v36H8z" fill="#fff" stroke="#111" stroke-width="2"/><path d="M12 12h3v12h-3zM18 15h12v2H18zM18 20h10v2H18zM20 25h7v2h-7zM12 30h5v2h-5zM13.500 28h2v6h-2z" fill="#1414f0"/><path d="M32 12L44 1l4 4-3 10-8 5z" fill="#14306c" stroke="#000"/><path d="M32 12l6 8-6 7-8 2 3-8z" fill="#fff" stroke="#111"/></svg></button>
                <button type="button" class="btn square" aria-label="Appearance"><svg viewBox="0 0 50 50"><path d="M16 10C24-1 43 2 43 17c0 11-7 14-10 22-3 5-12 4-18 7-8 2-13-4-10-10 2-5 9-4 9-10 0-5-2-10 2-16z" fill="#fab27a"/><ellipse cx="23" cy="11" rx="5" ry="3" fill="#f01414"/><circle cx="33" cy="9" r="3.500" fill="#1414f0"/><ellipse cx="37" cy="18" rx="4.500" ry="3.500" fill="#14f014"/><ellipse cx="33" cy="30" rx="4.500" ry="3.500" fill="#f08cf0"/><ellipse cx="14" cy="18" rx="3" ry="3" fill="#f0f014"/><ellipse cx="13" cy="39" rx="5" ry="3.500" fill="#111"/><path d="M11 23v14M16 42l14-8" stroke="#888" stroke-width="3"/><path d="M3 9l29 32" stroke="#111" stroke-width="3"/><path d="M32 38c2 4 6-2 10 0 0 4 3 6 4 11-6 0-12-2-14-11z" fill="#555"/></svg></button>
                <button type="button" class="btn ok">OK</button>
                <button type="button" class="btn">Apply</button>
                <button type="button" class="btn">Cancel</button>
            </div>
        </form>

        <!-- context menus -->
        <div class="context" role="menu">
            <button role="menuitem" class="arrow selected">Marker</button>
            <hr>
            <button role="menuitem" class="arrow">Text</button>
            <hr>
            <button role="menuitem" class="arrow">Parameterize</button>
            <hr>
            <button role="menuitem" class="arrow">.example_1_crank_rocker.ground.MARKER_18</button>
            <hr>
            <button role="menuitem" class="arrow">Field Info</button>
        </div>
        <div class="submenu" role="menu">
            <button role="menuitem" class="selected">Pick</button>
            <button role="menuitem">Browse...</button>
            <button role="menuitem" class="arrow">Guesses</button>
            <button role="menuitem">Create</button>
        </div>

        <!-- watermark face -->
        <svg class="face" viewBox="1250 880 700 750">
            <g transform="translate(1050 580) scale(.7015 .574)">
                <path d="M325 970C330 900 360 800 375 760 390 700 420 630 450 590L500 573 545 590 635 680C670 750 690 830 703 880L683 930H626C590 880 575 800 545 730L510 687C490 760 460 840 435 940 425 1000 420 1060 380 1062 340 1060 320 1030 325 970z"/>
                <path d="M877 870C880 780 910 730 930 665 950 610 965 545 1000 546L1060 552C1110 600 1150 650 1170 720 1200 800 1220 850 1240 930L1242 970C1255 1010 1250 1055 1205 1057 1175 1055 1155 1035 1145 1025 1145 940 1125 850 1095 760 1080 730 1050 690 1035 668 1010 730 990 780 972 830 955 880 950 905 920 908 890 905 877 890 877 870z"/>
            </g>
            <g transform="translate(1250 1150) scale(.4146 .3333)">
                <path fill-rule="evenodd" d="M72 760C75 620 150 400 330 290 450 200 540 165 600 150L650 127 820 113 1045 152 1090 170 1250 255 1310 315 1340 335C1400 410 1430 460 1470 515 1500 600 1490 700 1475 800 1440 900 1400 1000 1375 1050 1330 1110 1300 1180 1225 1245 1150 1290 1080 1325 1000 1335 940 1345 920 1360 860 1360L720 1366 640 1367C560 1360 440 1340 375 1305L145 1100C90 1030 72 900 72 760zM208 800C210 700 240 600 320 530 400 430 460 390 535 362 600 350 620 340 660 325 760 310 900 320 1040 370 1130 430 1200 480 1240 515 1280 560 1310 590 1322 640 1330 720 1320 820 1297 890L1278 923C1255 905 1230 905 1210 912 1200 890 1200 850 1195 820 1175 720 1150 600 1125 560 1090 520 1050 500 1000 493 965 520 950 560 962 608 995 680 990 740 1005 810 1020 900 1040 1010 1080 1050 1100 1070 1120 1080 1142 1080 1120 1115 1060 1125 1010 1140 900 1130 760 1155 660 1157 560 1155 480 1130 400 1090L270 985C235 920 205 860 208 800z"/>
                <path d="M530 515C555 460 600 455 635 465 680 500 700 580 688 640 670 720 630 860 605 990L560 1028C500 1025 440 1000 442 910 460 760 510 600 530 515z"/>
            </g>
        </svg>

        <!-- step marks -->
        <span class="mark mark-a">a</span>
        <span class="mark mark-b">b</span>
        <span class="mark mark-c">c</span>
        <span class="mark mark-d">d</span>
        <span class="mark long mark-1e">1e <i>右击</i></span>
        <span class="mark long mark-2e">2e <i>右击</i></span>
        <span class="mark long mark-3e">3e <i>右击</i></span>
        <span class="mark mark-i">i</span>
        <span class="mark mark-f">f</span>
        <span class="mark mark-g">g</span>
        <span class="mark mark-ok">i</span>
        <span class="mark pair mark-1h">1h</span>
        <span class="mark pair mark-2h">2h</span>
        <span class="mark pair mark-3h">3h</span>

        <div class="signature"><b>知乎</b> @午夜柴油拖拉机</div>
    </div>
</body>
</html>
```
FILE: styles.css
```css
* {
    box-sizing: border-box;
}

body {
    margin: 0;
    font-family: "Liberation Sans", Arial, "Noto Sans CJK SC", sans-serif;
    font-size: 40px;
    color: #222;
    background: #d2dfef;
}

button, input {
    font: inherit;
    color: inherit;
}

button {
    padding: 0;
    border: none;
    background: none;
    white-space: nowrap;
}

h1, h2 {
    margin: 0;
    font-size: 40px;
    font-weight: normal;
}

.defs {
    position: absolute;
}

.app {
    position: relative;
    display: flex;
    flex-direction: column;
    min-height: 100vh;
    border-left: 3px solid #a9adb4;
    overflow: hidden;
}

.logo {
    width: 50px;
    height: 50px;
    flex: none;
}

.logo-text {
    font: bold 15px "Open Sans", sans-serif;
    fill: #c8203c;
}

/* title bar */
.titlebar {
    display: flex;
    align-items: center;
    gap: 7px;
    height: 97px;
    padding: 4px 62px 4px 24px;
    color: #8f8f8f;
    background: linear-gradient(90deg, #5c5a62 0 17%, #9a9a9e 17% 41%, #5c5a62 41% 48%, #e3e3e3 48% 57%, #0a78d8 57% 62%, #e3e3e3 62% 71%, #4c4a52 71%) top / 100% 4px no-repeat, #fff;
}

.titlebar h1, .win-title h2 {
    font-family: "Open Sans", "Noto Sans", sans-serif;
    font-size: 39px;
}

.win-buttons {
    display: flex;
    gap: 120px;
    margin-left: auto;
}

.win-buttons svg, .close svg {
    display: block;
    width: 25px;
    height: 25px;
    fill: none;
    stroke: currentColor;
    stroke-width: 2;
}

/* menu and toolbar */
.menu-row {
    display: flex;
    height: 93px;
    background: #f0f8ff;
    color: #1c1cf0;
}

.menu {
    display: flex;
    align-items: center;
    gap: 27px;
    min-width: 712px;
    padding: 0 12px 12px;
}

.handle {
    width: 14px;
    height: 80px;
    margin: 6px 15px 0 0;
    border: solid #a9a9a9;
    border-width: 0 3px 2px;
}

.tools {
    display: flex;
    align-items: center;
    padding: 0 4px 0 8px;
    border-left: 3px solid #b3b1ab;
}

.tools-wide {
    flex: 1;
    min-width: 0;
    padding: 0 0 0 4px;
    color: #222;
}

.tool {
    width: 84px;
    flex: none;
}

.tool svg {
    display: block;
    width: 78px;
    height: 78px;
    margin: 0 auto;
}

.tool.drop {
    width: 110px;
}

.field {
    min-width: 0;
    height: 78px;
    padding: 8px 14px 0;
    color: #222;
    background: #fff;
    border: 4px solid #808080;
    border-right-color: #f4f4f4;
    border-bottom-color: #f4f4f4;
    border-radius: 0;
}

.increment {
    flex: 1;
    height: 90px;
    margin: 0 8px 0 4px;
    padding: 0 14px 4px;
}

.help {
    width: 104px;
    height: 93px;
    flex: none;
}

.help svg {
    display: block;
    width: 104px;
    height: 93px;
    overflow: visible;
}

.help-text {
    font: bold 36px "Open Sans", sans-serif;
    fill: #fff;
}

/* tabs */
.tabs {
    display: flex;
    align-items: flex-end;
    gap: 6px;
    height: 68px;
    padding-left: 2px;
    background: #d2dfef;
}

.tab {
    height: 61px;
    padding: 3px 33px 0;
    color: #1c1cf0;
    background: #c1d0e1;
    border: solid #eef4fb;
    border-width: 3px 3px 0;
    border-right-color: #7f8790;
    border-radius: 6px 6px 0 0;
}

.tab.active {
    align-self: stretch;
    height: 68px;
    padding: 3px 39px 0 37px;
    background: #f8fbff;
    border: none;
}

/* ribbon */
.ribbon {
    display: flex;
    align-items: flex-start;
    gap: 14px;
    padding: 14px 19px 12px;
    background: linear-gradient(#e7eef7, #d2dfef 30%, #a9bdd4 80%, #9fb6cd);
    border-top: 4px solid #f8fbff;
    border-bottom: 5px solid #70767e;
}

.group {
    min-width: 320px;
    padding: 0 2px 5px;
    color: #1c1cf0;
    background: #e7eff8;
    border: 3px solid #a9adb2;
    outline: 3px solid #f2f6fb;
    outline-offset: -6px;
}

.group h2 {
    height: 64px;
    padding: 0 10px;
    line-height: 64px;
    text-align: center;
    background: #d2dfef;
}

.group:last-child h2 {
    padding: 0 14px;
}

.icons {
    display: grid;
    grid-auto-rows: 98px;
    gap: 4px 8px;
    justify-content: center;
    height: 228px;
    padding: 14px 0;
}

.icons.single {
    align-content: center;
}

.icons.four {
    grid-template-columns: repeat(4, 86px);
    padding: 14px;
}

.icons.three {
    grid-template-columns: repeat(3, 86px);
    column-gap: 22px;
}

.icons.two {
    grid-template-columns: repeat(2, 86px);
    column-gap: 60px;
}

.cell svg {
    display: block;
    width: 76px;
    height: 76px;
    margin: 0 auto;
    overflow: visible;
}

.cell.lit {
    background: #fdf38c;
}

.fx {
    font: bold 46px "Open Sans", sans-serif;
    fill: #687684;
}

.fx-sub {
    font: 19px "Open Sans", sans-serif;
    fill: #4f5f6e;
}

/* workspace */
.workspace {
    flex: 1;
    display: grid;
    grid-template-columns: 19% 1fr;
}

.sidebar {
    display: flex;
    flex-direction: column;
    background: #eaf3ff;
    border-right: 5px solid #8c9097;
}

.measure {
    flex: 1;
    display: flex;
    flex-direction: column;
    align-items: flex-start;
    margin-top: 11px;
    border-top: 3px solid #a9a9a9;
}

.measure h2 {
    align-self: stretch;
    margin-left: 24px;
    padding: 30px 0 24px;
    border-bottom: 3px solid #a9a9a9;
}

.btn {
    height: 78px;
    background: #eeeeee;
    border: 4px solid #fafafa;
    border-right-color: #808080;
    border-bottom-color: #808080;
}

.advanced {
    width: 238px;
    margin: auto 0 76px 165px;
}

.browser {
    display: flex;
    flex-direction: column;
    padding: 12px 8px 10px 12px;
    background: #dbe6f4;
    border: solid #8c9097;
    border-width: 5px 0 4px;
}

.grip {
    height: 10px;
    margin-bottom: 10px;
    border: solid #a9a9a9;
    border-width: 2px 0;
}

.combo {
    height: 70px;
    margin-bottom: 16px;
    padding-top: 0;
}

.browse {
    height: 94px;
    margin-bottom: 4px;
    padding-left: 34px;
    line-height: 82px;
    color: #1c1cf0;
    background: linear-gradient(#fafcff, #e2ebfa);
}

.tree {
    display: flex;
    justify-content: space-between;
    background: #eef6ff;
    border: solid #808080;
    border-width: 4px 0 0 4px;
}

.tree ul {
    flex: 1;
    margin: 4px 0 0 34px;
    padding: 0;
    list-style: none;
    border-left: 2px dotted #555;
}

.tree li {
    display: flex;
    align-items: center;
    gap: 8px;
    height: 56px;
    white-space: nowrap;
}

.tree li svg {
    width: 44px;
    height: 34px;
}

.exp {
    width: 28px;
    height: 28px;
    margin: 0 13px 0 -15px;
    font: bold 30px/20px "Liberation Sans", sans-serif;
    background: #fff;
    border: 2px solid #8c8c8c;
}

.scroll {
    display: flex;
    flex-direction: column;
    width: 54px;
    background: #f0f0f0;
}

.thumb {
    flex: 1;
    margin-bottom: 24px;
    background: #eef4fb;
    border: 4px solid #f5f8fc;
    border-right-color: #808080;
    border-bottom-color: #808080;
}

.down {
    height: 52px;
    background: #eeeeee;
    border: 4px solid #fafafa;
    border-right-color: #808080;
    border-bottom-color: #808080;
}

.down::before {
    content: "";
    display: block;
    width: 0;
    margin: 0 auto;
    border: 12px solid transparent;
    border-top-color: #000;
    border-bottom: 0;
}

.search {
    height: 76px;
    margin-top: 8px;
}

/* modelling canvas */
.canvas {
    position: relative;
    background: linear-gradient(#3232cc, #000);
}

.model {
    position: absolute;
    inset: 0;
    width: 100%;
    height: 100%;
}

.model-name {
    font: 35px "DejaVu Sans", sans-serif;
    fill: #e6e6ff;
}

.gravity {
    font: 34px "Open Sans", sans-serif;
    fill: #e00c1c;
}

.axis {
    stroke: #d8d8e6;
    stroke-width: 4;
}

.ln {
    fill: none;
    stroke-width: 3;
}

.cyan {
    stroke: #00d4dc;
    --solid: #00f0f8;
}

.red {
    stroke: #e00c1c;
    --solid: #ff0000;
}

.pink {
    stroke: #d8089c;
    --solid: #ff0aa0;
}

.green {
    stroke: #00dc14;
    --solid: #00ff14;
}

.solid {
    fill: var(--solid);
}

.callout-arrows {
    stroke: #e3212b;
    stroke-width: 16;
    --solid: #e3212b;
}

.callout-arrows .solid {
    stroke-width: 6;
}

/* status bar */
.statusbar {
    display: flex;
    align-items: center;
    justify-content: space-between;
    height: 100px;
    padding: 0 6px 10px 16px;
    background: #e7eff8;
    border-bottom: 3px solid #b5b9be;
}

.status-mark {
    width: 60px;
    height: 68px;
}

.status-icons {
    display: flex;
    gap: 5px;
}

.status-icons svg {
    display: block;
    width: 76px;
    height: 76px;
    overflow: visible;
}

.info-text {
    font: bold 30px "Open Sans", sans-serif;
    fill: #1478dc;
}

/* floating windows */
.window {
    position: absolute;
    background: #fff;
}

.win-title {
    display: flex;
    align-items: center;
    gap: 6px;
    height: 92px;
    padding: 0 40px 0 27px;
}

.close {
    margin-left: auto;
}

.coords {
    position: absolute;
    left: 717px;
    top: 2136px;
    display: flex;
    gap: 140px;
    width: 402px;
    height: 180px;
    padding-left: 38px;
    background: #efefef;
}

.chart {
    left: 95px;
    top: 1485px;
    width: 1345px;
    box-shadow: 0 -2px 0 #5a5aa8;
}

.chart .win-title {
    color: #8f8f8f;
}

.plot {
    display: block;
    width: 100%;
}

.plot-text {
    font: 36px "Liberation Sans", sans-serif;
    fill: #222;
}

.plot-text text {
    white-space: pre;
}

.plot-text .current {
    fill: #fb0a0a;
}

.plot-title {
    font: 43px "Noto Sans CJK SC", sans-serif;
    fill: #d8202a;
}

.unit {
    font: bold 50px "Liberation Serif", serif;
}

.y-title {
    position: absolute;
    left: 90px;
    top: 1732px;
    writing-mode: vertical-rl;
    transform: rotate(180deg);
    font-size: 43px;
    line-height: 50px;
    color: #d8202a;
}

.y-title b {
    font-family: "Liberation Serif", serif;
    font-size: 50px;
}

.dialog {
    left: 545px;
    top: 672px;
    width: 1004px;
    padding-bottom: 12px;
    background: #e7eff8;
    border: 2px solid #50545c;
    box-shadow: 4px 6px 24px rgba(0, 0, 0, 0.5);
}

.dialog .win-title {
    height: 96px;
    padding-bottom: 2px;
    background: #fff;
    color: #111;
}

.form {
    display: grid;
    grid-template-columns: 344px 1fr;
    gap: 6px 0;
    align-items: center;
    padding: 13px 7px 0 12px;
}

.space {
    grid-column: 1 / 3;
    height: 30px;
}

.check {
    display: flex;
    align-items: center;
    gap: 19px;
    margin: 66px 12px 0;
    color: #8c8c8c;
}

.check input {
    appearance: none;
    width: 38px;
    height: 38px;
    margin: 0;
    background: #f0f0f0;
    border: 4px solid #606060;
    border-right-color: #fafafa;
    border-bottom-color: #fafafa;
}

.check input::before {
    content: "";
    display: block;
    width: 10px;
    height: 18px;
    margin: 1px 0 0 9px;
    border: solid #808080;
    border-width: 0 5px 5px 0;
    transform: rotate(40deg);
}

.actions {
    display: flex;
    align-items: flex-end;
    gap: 6px;
    margin: 78px 8px 0 12px;
}

.actions .btn {
    flex: 1;
}

.actions .square {
    flex: none;
    width: 112px;
    height: 113px;
}

.square svg {
    display: block;
    width: 100px;
    height: 100px;
    margin: 0 auto;
}

.actions .ok {
    margin-left: 24px;
}

/* menus */
.context {
    position: absolute;
    left: 1204px;
    top: 950px;
    display: flex;
    flex-direction: column;
    width: 1003px;
    padding: 8px 14px 9px 8px;
    color: #1c1cf0;
    background: #f0f8ff;
    box-shadow: 5px 5px 8px rgba(0, 0, 0, 0.5);
}

.context button, .submenu button {
    display: flex;
    align-items: center;
    justify-content: space-between;
    height: 70px;
    padding: 2px 28px 0 54px;
}

.context hr {
    width: 100%;
    height: 3px;
    margin: 12px 0;
    border: none;
    background: #a9a9a9;
}

.context .selected {
    background: #3399ff;
}

.arrow::after {
    content: "";
    border: 13px solid transparent;
    border-left-color: currentColor;
    border-right: 0;
}

.submenu {
    position: absolute;
    left: 2192px;
    top: 960px;
    display: flex;
    flex-direction: column;
    width: 316px;
    padding: 4px 5px;
    background: #f0f0f0;
    border: 5px solid #fcfcfc;
    border-right-color: #8c8c8c;
    border-bottom-color: #8c8c8c;
    box-shadow: 5px 5px 8px rgba(0, 0, 0, 0.5);
}

.submenu button {
    height: 69px;
    padding: 2px 34px 0 52px;
}

.submenu .selected {
    color: #fff;
    background: #0078d7;
}

/* watermark */
.face {
    position: absolute;
    left: 1247px;
    top: 880px;
    width: 700px;
    height: 750px;
    fill: rgba(255, 255, 255, 0.2);
    stroke: rgba(110, 110, 130, 0.4);
    pointer-events: none;
}

.face path {
    stroke-width: 2;
    vector-effect: non-scaling-stroke;
}

.signature {
    position: absolute;
    left: 2143px;
    top: 2288px;
    font: 92px/136px "Noto Sans CJK SC", sans-serif;
    color: #fff;
    white-space: nowrap;
    text-shadow: 5px 8px 0 rgba(110, 110, 110, 0.6);
}

.signature b {
    margin-right: 16px;
    font-size: 98px;
}

/* step marks */
.mark {
    position: absolute;
    display: flex;
    align-items: center;
    justify-content: center;
    width: 67px;
    height: 68px;
    border: 9px solid #e3212b;
    border-radius: 34px;
    background: #fff;
    color: #d8202a;
    font: italic bold 46px "Liberation Serif", serif;
}

.mark i {
    margin-left: 10px;
    font: normal 42px "Noto Sans CJK SC", sans-serif;
}

.mark.long {
    width: 187px;
}

.mark.pair {
    width: 78px;
}

.mark-a { left: 1120px; top: 182px; }
.mark-b { left: 429px; top: 267px; }
.mark-c { left: 127px; top: 1362px; }
.mark-d { left: 1232px; top: 793px; }
.mark-1e { left: 1163px; top: 882px; }
.mark-2e { left: 1144px; top: 1010px; }
.mark-3e { left: 1016px; top: 1132px; }
.mark-i { left: 1444px; top: 895px; }
.mark-f { left: 1417px; top: 959px; }
.mark-g { left: 2368px; top: 968px; }
.mark-ok { left: 834px; top: 1358px; font: bold 46px "Open Sans", sans-serif; }
.mark-1h { left: 2940px; top: 2268px; }
.mark-2h { left: 2489px; top: 2268px; }
.mark-3h { left: 2398px; top: 1434px; }
```
